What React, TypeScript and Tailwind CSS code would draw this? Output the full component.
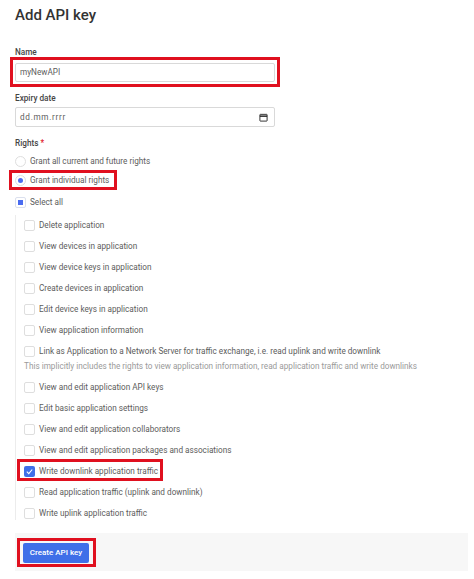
const rights = [
  { label: "Delete application" },
  { label: "View devices in application" },
  { label: "View device keys in application" },
  { label: "Create devices in application" },
  { label: "Edit device keys in application" },
  { label: "View application information" },
  {
    label: "Link as Application to a Network Server for traffic exchange, i.e. read uplink and write downlink",
    note: "This implicitly includes the rights to view application information, read application traffic and write downlinks",
  },
  { label: "View and edit application API keys" },
  { label: "Edit basic application settings" },
  { label: "View and edit application collaborators" },
  { label: "View and edit application packages and associations" },
  { label: "Write downlink application traffic", checked: true },
  { label: "Read application traffic (uplink and downlink)" },
  { label: "Write uplink application traffic" },
];

function RedBox({ className }: { className: string }) {
  return <div className={`absolute border-[3px] border-[#e0101f] pointer-events-none ${className}`} />;
}

function Checkbox({ checked }: { checked?: boolean }) {
  if (checked) {
    return (
      <span className="w-[11px] h-[11px] rounded-[2px] bg-[#3f6fe8] flex items-center justify-center shrink-0">
        <svg width="9" height="9" viewBox="0 0 10 10" fill="none" stroke="#ffffff" strokeWidth="1.2">
          <path d="M2 5.2 L4.2 7.4 L8 2.8" />
        </svg>
      </span>
    );
  }
  return <span className="w-[11px] h-[11px] rounded-[2px] border border-[#dedede] bg-white shrink-0" />;
}

function Radio({ checked }: { checked?: boolean }) {
  return (
    <span className="w-[11px] h-[11px] rounded-full border border-[#dedede] bg-white flex items-center justify-center shrink-0">
      {checked && <span className="w-[5px] h-[5px] rounded-full bg-[#4a6cf0]" />}
    </span>
  );
}

export default function App() {
  return (
    <div className="font-['Roboto',sans-serif] w-[474px] h-[579px] bg-white overflow-hidden text-[8.2px] text-[#5c5c5c] relative">
      <div className="pl-[15px] pt-[3px]">
        <h1 className="text-[15px] leading-[24px] font-medium text-[#333333]">Add API key</h1>

        <div className="mt-[19px] text-[8.2px] leading-[12px] font-medium text-[#444444]">Name</div>
        <div className="relative mt-[5px] w-[260px]">
          <div className="h-[19px] border border-[#d9d9d9] rounded-[2px] flex items-center pl-[4px]">myNewAPI</div>
          <RedBox className="-left-[5px] -right-[5px] -top-[6px] -bottom-[5px]" />
        </div>

        <div className="mt-[10px] text-[8.2px] leading-[12px] font-medium text-[#444444]">Expiry date</div>
        <div className="mt-[3px] w-[260px] h-[20px] border border-[#d9d9d9] rounded-[2px] flex items-center justify-between pl-[4px] pr-[6px]">
          <span className="tracking-[0.7px]">dd.mm.rrrr</span>
          <svg width="9" height="9" viewBox="0 0 10 10" fill="none" stroke="#222222" strokeWidth="1">
            <rect x="1" y="1.5" width="8" height="7.5" rx="0.5" />
            <path d="M1 3.5 H9" strokeWidth="1.6" />
          </svg>
        </div>

        <div className="mt-[10px] text-[8.2px] leading-[12px] font-medium text-[#444444]">
          Rights <span className="text-[#e0101f]">*</span>
        </div>
        <div className="mt-[6px] h-[12px] flex items-center gap-[4px]">
          <Radio />
          <span>Grant all current and future rights</span>
        </div>
        <div className="relative mt-[7px] h-[12px] w-[97px] flex items-center gap-[4px]">
          <Radio checked />
          <span className="whitespace-nowrap">Grant individual rights</span>
          <RedBox className="-left-[6px] -right-[5px] -top-[4px] -bottom-[4px]" />
        </div>
        <div className="mt-[10px] h-[12px] flex items-center gap-[4px]">
          <span className="w-[11px] h-[11px] rounded-[2px] border border-[#dbe0ee] flex items-center justify-center">
            <span className="w-[5px] h-[5px] bg-[#4a6cf0]" />
          </span>
          <span>Select all</span>
        </div>

        <div className="mt-[7px] border-l border-[#ececec] pl-[8px] h-[305px]">
          {rights.map((r) => (
            <div key={r.label} className={r.note ? "h-[36px] pt-[4px]" : "h-[21px] pt-[4px]"}>
              <div className={`relative flex items-center gap-[4px] h-[12px] whitespace-nowrap ${r.checked ? "w-[136px]" : ""}`}>
                <Checkbox checked={r.checked} />
                <span>{r.label}</span>
                {r.checked && <RedBox className="-left-[7px] -right-[3px] -top-[6px] -bottom-[4px]" />}
              </div>
              {r.note && (
                <div className="mt-[3px] text-[#9a9a9a] whitespace-nowrap leading-[12px]">{r.note}</div>
              )}
            </div>
          ))}
        </div>

        <div className="mt-[13px] h-[38px] w-[453px] bg-[#f7f7f7] flex items-start pt-[10px] pl-[8px]">
          <div className="relative">
            <button className="h-[20px] w-[66px] rounded-[2px] bg-[#3f6fe8] text-white text-[8px] font-medium flex items-center justify-center">
              Create API key
            </button>
            <RedBox className="-left-[6px] -right-[7px] -top-[5px] -bottom-[4px]" />
          </div>
        </div>
      </div>
    </div>
  );
}
